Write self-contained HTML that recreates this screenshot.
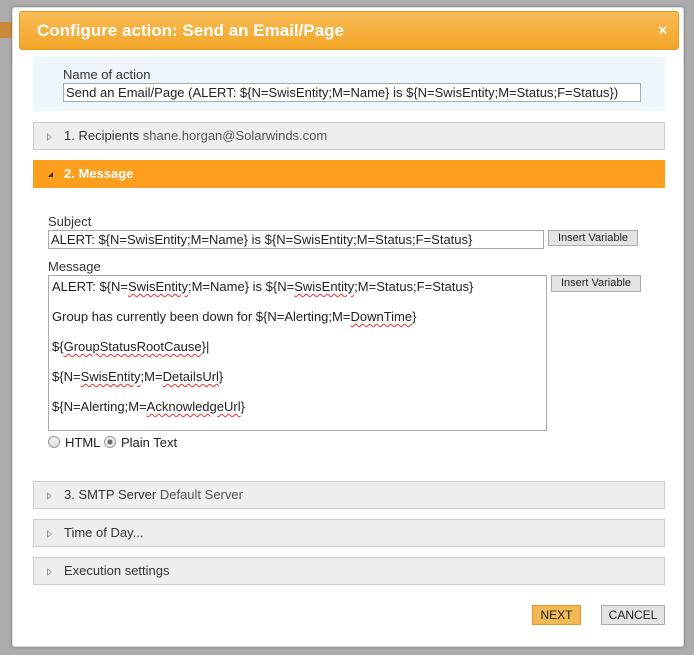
<!DOCTYPE html>
<html><head><style>
*{box-sizing:border-box}
body{margin:0;width:694px;height:655px;background:#acacac;font-family:"Liberation Sans",sans-serif;position:relative;overflow:hidden;color:#222}
.a{position:absolute}
.dlg{left:12px;top:7px;width:672px;height:640px;background:#fff;border:1px solid #ddd;border-radius:3px;box-shadow:0 0 3px rgba(0,0,0,.3)}
.hdr{left:19px;top:11px;width:660px;height:39px;background:linear-gradient(#f8bb55,#f3a528);border:1px solid #e69a25;border-radius:3px;color:#fff;font-weight:bold;font-size:17px;line-height:37px;padding-left:17px}
.bar{left:33px;width:632px;height:28px;background:#eee;border:1px solid #ccc;font-size:13px;line-height:26px;padding-left:30px;color:#333}
.tri{position:absolute;left:13px;top:10px;width:0;height:0;border-left:5px solid #999;border-top:4px solid transparent;border-bottom:4px solid transparent}
.tri:after{content:"";position:absolute;left:-4px;top:-2px;border-left:3px solid #eee;border-top:2px solid transparent;border-bottom:2px solid transparent}
.in{border:1px solid #aaa;background:#fff;font-size:13px;line-height:17px;padding-left:2px;white-space:nowrap}
.btn{background:#e3e3e3;border:1px solid #aaa;font-size:11px;text-align:center;line-height:14px}
.sq{text-decoration:underline wavy #e33;text-decoration-thickness:1px;text-underline-offset:2px}
.msg div{height:30px}
</style></head><body>
<div class="a" style="left:0;top:22px;width:14px;height:16px;background:#c98a3c"></div>
<div class="a dlg"></div>
<div class="a hdr">Configure action: Send an Email/Page<span style="position:absolute;right:11px;font-size:15px">×</span></div>
<div class="a" style="left:33px;top:57px;width:632px;height:54px;background:#eef5fb"></div>
<div class="a" style="left:63px;top:67px;font-size:13px;color:#333">Name of action</div>
<div class="a in" style="left:63px;top:83px;width:578px;height:19px">Send an Email/Page (ALERT: ${N=SwisEntity;M=Name} is ${N=SwisEntity;M=Status;F=Status})</div>
<div class="a bar" style="top:122px"><span class="tri"></span>1. Recipients <span style="color:#555">shane.horgan@Solarwinds.com</span></div>
<div class="a bar" style="top:160px;background:#fd9e1e;border-color:#fd9e1e;color:#fff;font-weight:bold"><span style="position:absolute;left:14px;top:11px;width:0;height:0;border-right:5px solid #333;border-top:5px solid transparent"></span>2. Message</div>
<div class="a" style="left:48px;top:214px;font-size:13px;color:#333">Subject</div>
<div class="a in" style="left:48px;top:230px;width:496px;height:19px">ALERT: ${N=SwisEntity;M=Name} is ${N=SwisEntity;M=Status;F=Status}</div>
<div class="a btn" style="left:548px;top:230px;width:90px;height:16px">Insert Variable</div>
<div class="a" style="left:48px;top:259px;font-size:13px;color:#333">Message</div>
<div class="a in msg" style="left:48px;top:275px;width:499px;height:156px;padding:2px 0 0 3px;white-space:normal">
<div>ALERT: ${N=<span class="sq">SwisEntity</span>;M=Name} is ${N=<span class="sq">SwisEntity</span>;M=Status;F=Status}</div>
<div>Group has currently been down for ${N=Alerting;M=<span class="sq">DownTime</span>}</div>
<div>${<span class="sq">GroupStatusRootCause</span>}|</div>
<div>${N=<span class="sq">SwisEntity</span>;M=<span class="sq">DetailsUrl</span>}</div>
<div>${N=Alerting;M=<span class="sq">AcknowledgeUrl</span>}</div>
</div>
<div class="a btn" style="left:551px;top:275px;width:90px;height:17px">Insert Variable</div>
<div class="a" style="left:48px;top:436px;width:12px;height:12px;border-radius:50%;border:1px solid #999;background:linear-gradient(#f6f6f6,#ddd)"></div>
<div class="a" style="left:65px;top:435px;font-size:13px">HTML</div>
<div class="a" style="left:104px;top:436px;width:12px;height:12px;border-radius:50%;border:1px solid #999;background:radial-gradient(#666 0 2px,#eee 3px)"></div>
<div class="a" style="left:121px;top:435px;font-size:13px">Plain Text</div>
<div class="a bar" style="top:481px"><span class="tri"></span>3. SMTP Server <span style="color:#555">Default Server</span></div>
<div class="a bar" style="top:519px"><span class="tri"></span>Time of Day...</div>
<div class="a bar" style="top:557px"><span class="tri"></span>Execution settings</div>
<div class="a btn" style="left:532px;top:605px;width:49px;height:20px;background:#f0b955;border-color:#e8932a;font-size:12px;line-height:18px">NEXT</div>
<div class="a btn" style="left:601px;top:605px;width:64px;height:20px;font-size:12px;line-height:18px">CANCEL</div>
</body></html>
